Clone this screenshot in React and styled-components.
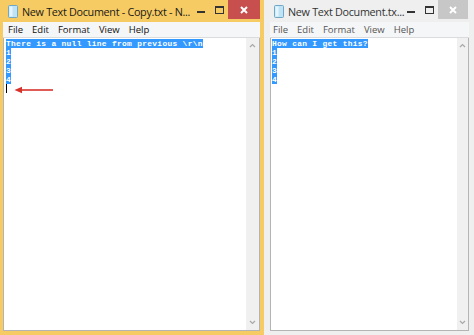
import styled, { createGlobalStyle } from 'styled-components';

const Global = createGlobalStyle`
  html, body { margin: 0; padding: 0; background: #ffffff; }
  body { font-family: "Open Sans", "Noto Sans", sans-serif; }
`;

const Desktop = styled.div`
  width: 474px;
  height: 335px;
  display: flex;
  overflow: hidden;
`;

const Window = styled.div`
  width: ${({ w }) => w}px;
  height: 335px;
  flex-shrink: 0;
  display: flex;
  flex-direction: column;
  background: ${({ active }) => (active ? '#f7cb63' : '#efefef')};
  padding: ${({ active }) => (active ? '0 4px 4px 3px' : '0 5px 4px 6px')};
  box-sizing: border-box;
`;

const TitleBar = styled.div`
  height: 22px;
  display: flex;
  align-items: flex-start;
  flex-shrink: 0;
`;

const TitleText = styled.div`
  font-family: "Open Sans", "Noto Sans", sans-serif;
  font-size: 10.8px;
  line-height: 14px;
  color: ${({ active }) => (active ? '#1a1a1a' : '#333')};
  margin: 5px 0 0 4px;
  white-space: nowrap;
  letter-spacing: -0.3px;
  flex: 1;
  min-width: 0;
`;

const IconWrap = styled.div`
  margin: 5px 0 0 ${({ offset }) => offset}px;
  width: 10px;
  height: 13px;
  line-height: 0;
`;

const CapButton = styled.div`
  width: ${({ w }) => w}px;
  height: 19px;
  flex-shrink: 0;
  display: flex;
  align-items: center;
  justify-content: center;
  background: ${({ bg }) => bg || 'transparent'};
  svg { display: block; }
`;

const MenuBar = styled.div`
  height: 15px;
  display: flex;
  align-items: center;
  background: #f5f6f7;
  border-bottom: 1px solid #dadbdc;
  padding-left: ${({ pad }) => pad}px;
  flex-shrink: 0;
`;

const MenuItem = styled.span`
  font-size: 9.5px;
  color: ${({ active }) => (active ? '#111' : '#555')};
  margin-right: 9px;
`;

const Editor = styled.div`
  flex: 1;
  display: flex;
  background: #fff;
  border: 1px solid #b4b4b4;
  border-top: none;
  position: relative;
`;

const TextArea = styled.div`
  flex: 1;
  padding: 1px 0 0 ${({ pad }) => pad}px;
  font-family: "Liberation Mono", "DejaVu Sans Mono", monospace;
  font-weight: bold;
  font-size: 7.9px;
  line-height: 9px;
  letter-spacing: 0.31px;
`;

const Line = styled.div`
  height: 9px;
  white-space: pre;
  display: flex;
`;

const Sel = styled.span`
  display: inline-block;
  height: 9px;
  line-height: 9px;
  background: #3399ff;
  color: #fff;
`;

const Caret = styled.div`
  width: 1px;
  height: 9px;
  background: #000;
`;

const Scrollbar = styled.div`
  width: ${({ w }) => w}px;
  background: #f0f0f0;
  display: flex;
  flex-direction: column;
  justify-content: space-between;
  align-items: center;
  padding: 5px 0;
  svg { display: block; }
`;

const Arrow = styled.div`
  position: absolute;
  left: 10px;
  top: 48px;
  line-height: 0;
  svg { display: block; }
`;

const NotepadIcon = () => (
  <svg width="10" height="13" viewBox="0 0 10 13">
    <rect x="0.5" y="0.5" width="9" height="12" rx="1" fill="#bfe3f4" stroke="#6fa7c4" />
    <rect x="1.5" y="1.5" width="3" height="10" fill="#e6f5fc" />
  </svg>
);

const Caps = ({ active }) => (
  <>
    <CapButton w={18}>
      <svg width="8" height="8"><rect x="0" y="5" width="8" height="2" fill="#333" /></svg>
    </CapButton>
    <CapButton w={18}>
      <svg width="9" height="8"><rect x="0.5" y="0.5" width="8" height="7" fill="none" stroke="#333" /><rect x="0" y="0" width="9" height="2" fill="#333" /></svg>
    </CapButton>
    <CapButton w={active ? 32 : 30} bg={active ? '#c7504f' : '#c7c7c7'}>
      <svg width="8" height="8"><path d="M1 1 L7 7 M7 1 L1 7" stroke="#fff" strokeWidth="2" /></svg>
    </CapButton>
  </>
);

const Chevron = ({ up }) => (
  <svg width="7" height="5" viewBox="0 0 7 5">
    <path d={up ? 'M1 4 L3.5 1.5 L6 4' : 'M1 1 L3.5 3.5 L6 1'} fill="none" stroke="#a8a8a8" strokeWidth="1.2" />
  </svg>
);

const menus = ['File', 'Edit', 'Format', 'View', 'Help'];

function NotepadWindow({ active, w, title, lines, caret, scrollW, iconOffset, capRight }) {
  return (
    <Window w={w} active={active}>
      <TitleBar>
        <IconWrap offset={iconOffset}><NotepadIcon /></IconWrap>
        <TitleText active={active}>{title}</TitleText>
        <Caps active={active} />
        <div style={{ width: capRight, flexShrink: 0 }} />
      </TitleBar>
      <MenuBar pad={active ? 5 : 3}>
        {menus.map((m) => <MenuItem key={m} active={active}>{m}</MenuItem>)}
      </MenuBar>
      <Editor>
        <TextArea pad={active ? 2 : 1}>
          {lines.map((l, i) => <Line key={i}><Sel>{l}</Sel></Line>)}
          {caret && <Line><Caret /></Line>}
        </TextArea>
        <Scrollbar w={scrollW}>
          <Chevron up />
          <Chevron />
        </Scrollbar>
        {caret && (
          <Arrow>
            <svg width="40" height="8" viewBox="0 0 40 8">
              <path d="M7 4 L39 4" stroke="#d9322b" strokeWidth="1.6" />
              <path d="M0.5 4 L8 0.8 L8 7.2 Z" fill="#d9322b" />
            </svg>
          </Arrow>
        )}
      </Editor>
    </Window>
  );
}

export default function App() {
  return (
    <>
      <Global />
      <Desktop>
        <NotepadWindow
          active
          w={264}
          title="New Text Document - Copy.txt - N..."
          lines={['There is a null line from previous \\r\\n', '1', '2', '3', '4']}
          caret
          scrollW={13}
          iconOffset={5}
          capRight={0}
        />
        <NotepadWindow
          w={210}
          title="New Text Document.tx..."
          lines={['How can I get this?', '1', '2', '3', '4']}
          scrollW={11}
          iconOffset={4}
          capRight={1}
        />
      </Desktop>
    </>
  );
}
